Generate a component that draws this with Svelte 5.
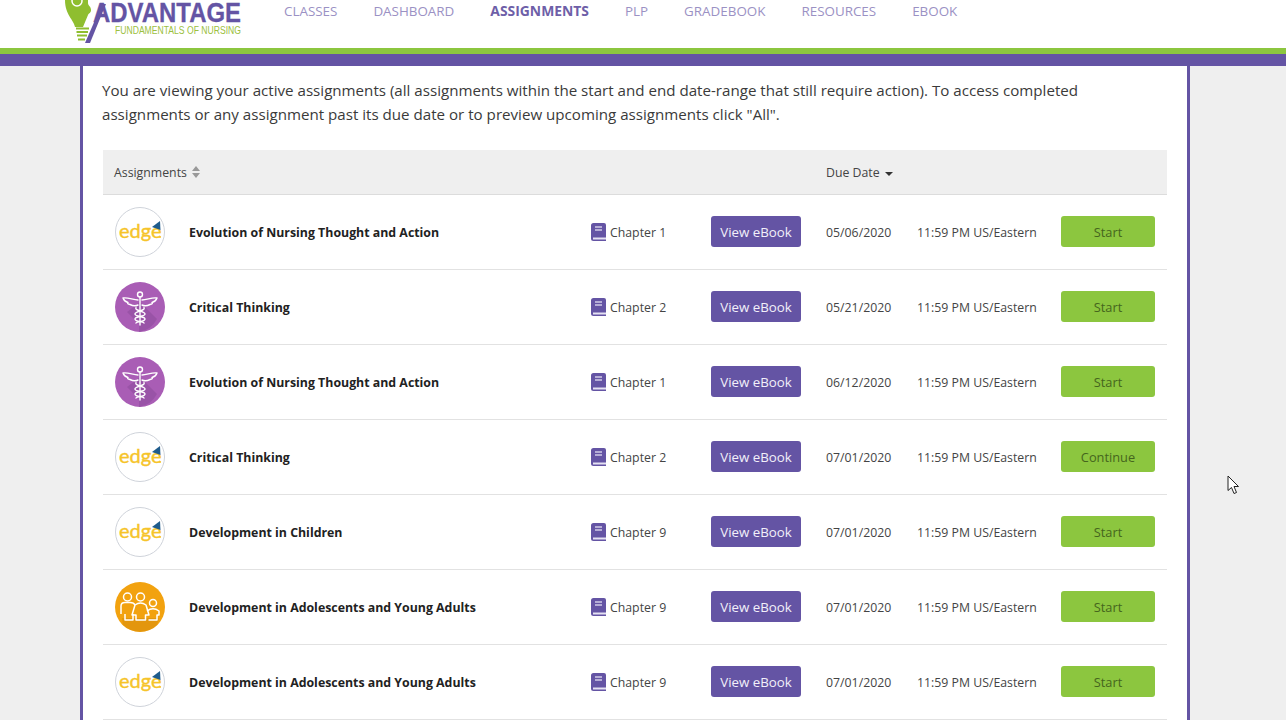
<script>
	const nav = ['CLASSES', 'DASHBOARD', 'ASSIGNMENTS', 'PLP', 'GRADEBOOK', 'RESOURCES', 'EBOOK'];

	const rows = [
		{ icon: 'edge', title: 'Evolution of Nursing Thought and Action', chapter: 1, date: '05/06/2020', action: 'Start' },
		{ icon: 'med', title: 'Critical Thinking', chapter: 2, date: '05/21/2020', action: 'Start' },
		{ icon: 'med', title: 'Evolution of Nursing Thought and Action', chapter: 1, date: '06/12/2020', action: 'Start' },
		{ icon: 'edge', title: 'Critical Thinking', chapter: 2, date: '07/01/2020', action: 'Continue' },
		{ icon: 'edge', title: 'Development in Children', chapter: 9, date: '07/01/2020', action: 'Start' },
		{ icon: 'family', title: 'Development in Adolescents and Young Adults', chapter: 9, date: '07/01/2020', action: 'Start' },
		{ icon: 'edge', title: 'Development in Adolescents and Young Adults', chapter: 9, date: '07/01/2020', action: 'Start' }
	];
</script>

<header>
	<div class="logo">
		<svg width="180" height="48" viewBox="0 0 180 48">
			<!-- bulb -->
			<path d="M0 -6 H23 V3 C23 6 26 6 26 10 C26 13 24 13 23 15 L18 27 H10 C9 20 0 15 0 0 Z" fill="#8fbe2f" />
			<circle cx="12" cy="1" r="5" fill="none" stroke="#fff" stroke-width="1.500" />
			<path d="M11 28.500 H24 M11.500 32 H23 M12 35.500 H22 M13 39.500 H20" stroke="#8fbe2f" stroke-width="2.200" />
			<path d="M20 43 L37 4 H41 L25 43 Z" fill="#6454a4" />
			<text x="28" y="22" class="brand" textLength="148" lengthAdjust="spacingAndGlyphs">ADVANTAGE</text>
			<text x="50" y="34" class="tagline" textLength="126" lengthAdjust="spacingAndGlyphs">FUNDAMENTALS OF NURSING</text>
		</svg>
	</div>
	<nav>
		{#each nav as item}
			<a href="#top" class:active={item === 'ASSIGNMENTS'}>{item}</a>
		{/each}
	</nav>
</header>
<div class="stripe-green"></div>
<div class="stripe-purple"></div>

<main>
	<div class="panel">
		<p class="intro">
			You are viewing your active assignments (all assignments within the start and end date-range that still require action). To access completed assignments or any assignment past its due date or to preview upcoming assignments click "All".
		</p>

		<div class="table">
			<div class="row head">
				<div class="h-title">
					Assignments
					<svg width="8" height="12" viewBox="0 0 8 12"><path d="M4 0 L8 5 H0 Z M4 12 L0 7 H8 Z" fill="#999" /></svg>
				</div>
				<div class="h-date">
					Due Date
					<svg width="8" height="5" viewBox="0 0 8 5"><path d="M0 0 H8 L4 4 Z" fill="#333" /></svg>
				</div>
			</div>

			{#each rows as row}
				<div class="row">
					<div class="badge">
						{#if row.icon === 'edge'}
							<svg width="50" height="50" viewBox="0 0 50 50">
								<circle cx="25" cy="25" r="24.500" fill="#fff" stroke="#cfd3da" />
								<text x="4" y="31" class="edge">edge</text>
								<circle cx="45" cy="30" r="1" fill="#f6c42a" />
								<path d="M37 20 L45 14 L45.500 23 Z" fill="#1f5c8c" />
							</svg>
						{:else if row.icon === 'med'}
							<svg width="50" height="50" viewBox="0 0 50 50">
								<circle cx="25" cy="25" r="25" fill="#a95db5" />
								<path d="M25 20 L42 37 A25 25 0 0 1 24 50 L24 42 L12 30 Z" fill="#8f4c9e" opacity="0.6" />
								<g fill="none" stroke="#fff" stroke-width="1.400" stroke-linecap="round" stroke-linejoin="round">
									<circle cx="25" cy="12.500" r="2.500" />
									<path d="M25 15 V43" />
									<path d="M23 18 C18 18 13 15 8 16 C9 19 11 20 13 20.500 C12 21.500 13 22 15 22.500 C18 24 21 24 23 23" />
									<path d="M27 18 C32 18 37 15 42 16 C41 19 39 20 37 20.500 C38 21.500 37 22 35 22.500 C32 24 29 24 27 23" />
									<path d="M21 25.500 C19 29 30 29 30 32 C30 35 20 34 20 37 C20 40 28 39 29 41" />
									<path d="M29 25.500 C31 29 20 29 20 32 C20 35 30 34 30 37 C30 40 22 39 21 41" />
								</g>
							</svg>
						{:else}
							<svg width="50" height="50" viewBox="0 0 50 50">
								<circle cx="25" cy="25" r="25" fill="#f2a20f" />
								<path d="M7 36 L44 36 L42 43 A25 25 0 0 1 8 43 Z" fill="#d98e0c" opacity="0.6" />
								<g fill="none" stroke="#fff" stroke-width="1.500" stroke-linejoin="round">
									<circle cx="12.500" cy="15" r="4" />
									<path d="M6 32 V24 Q6 20.500 10 20.500 H15 Q19 20.500 20 23 M18 32 V38 H10 V32" />
									<circle cx="25.500" cy="15" r="4" />
									<path d="M20 23 Q25.500 19 31 23 L34 33 H30.500 V38 H21 V33 H17 Z" />
									<circle cx="38" cy="21" r="3.500" />
									<path d="M32 29 Q38 24.500 44 29 V33 H42 V38 H33.500" />
								</g>
							</svg>
						{/if}
					</div>
					<div class="title">{row.title}</div>
					<div class="chapter">
						<svg width="15" height="18" viewBox="0 0 15 18">
							<path d="M2.500 0 H13 A2 2 0 0 1 15 2 V18 H2.500 A2.500 2.500 0 0 1 0 15.500 V2.500 A2.500 2.500 0 0 1 2.500 0 Z" fill="#6454a4" />
							<path d="M4 4 H11 M4 7 H11" stroke="#cfcae6" stroke-width="1.500" />
							<path d="M2 14.500 H15 V16.500 H2 Z" fill="#e4e1f2" />
						</svg>
						Chapter {row.chapter}
					</div>
					<div><button class="ebook">View eBook</button></div>
					<div class="date">{row.date}</div>
					<div class="time">11:59 PM US/Eastern</div>
					<div><button class="go">{row.action}</button></div>
				</div>
			{/each}
		</div>
	</div>
</main>

<svg class="cursor" width="13" height="20" viewBox="0 0 13 20">
	<path d="M1 1 V15.500 L4.500 12.500 L7 18.500 L9.500 17.500 L7 11.500 H11.500 Z" fill="#fff" stroke="#222" stroke-width="1" stroke-linejoin="round" />
</svg>

<style>
	:global(body) {
		background: #efefef;
		font-family: 'Open Sans', 'Liberation Sans', sans-serif;
		color: #333;
		height: 720px;
		overflow: hidden;
	}

	header {
		display: flex;
		height: 48px;
		background: #fff;
		overflow: hidden;
	}

	.logo {
		width: 284px;
		padding-left: 65px;
		box-sizing: border-box;
		flex-shrink: 0;
	}

	.logo svg {
		display: block;
	}

	.brand {
		font: bold 27px 'Liberation Sans', sans-serif;
		fill: #6454a4;
		stroke: #6454a4;
		stroke-width: 0.3px;
	}

	.tagline {
		font: 10px 'Liberation Sans', sans-serif;
		fill: #9bc040;
	}

	nav {
		display: flex;
		gap: 36px;
		padding-top: 2px;
	}

	nav a {
		color: #9b91c4;
		font-size: 13.400px;
		line-height: 18px;
		text-decoration: none;
	}

	nav a.active {
		color: #6e5fa8;
		font-weight: 700;
		font-size: 13.900px;
	}

	.stripe-green {
		height: 6px;
		background: #8cc63f;
	}

	.stripe-purple {
		height: 12px;
		background: #6454a4;
	}

	main {
		width: 1110px;
		margin-left: 80px;
		box-sizing: border-box;
		background: #fff;
		border-left: 3px solid #6454a4;
		border-right: 3px solid #6454a4;
	}

	.panel {
		padding: 12px 20px 0 20px;
	}

	.intro {
		margin: 0 0 24px -1px;
		font-size: 15.130px;
		line-height: 24px;
		color: #3a3a3a;
	}

	.row {
		display: grid;
		grid-template-columns: 74px 402px 120px 115px 91px 144px 94px;
		padding: 0 12px;
		height: 75px;
		box-sizing: border-box;
		align-items: center;
		border-bottom: 1px solid #e2e2e2;
		font-size: 12.300px;
	}

	.row.head {
		height: 45px;
		background: #efefef;
		color: #444;
		border-bottom: 1px solid #dcdcdc;
	}

	.h-title {
		grid-column: 1 / 5;
		display: flex;
		align-items: center;
		gap: 5px;
		margin-left: -1px;
	}

	.h-date {
		grid-column: 5 / 7;
		display: flex;
		align-items: center;
		gap: 5px;
	}

	.h-date svg {
		margin-top: 4px;
	}

	.badge {
		height: 50px;
	}

	.badge svg {
		display: block;
	}

	.edge {
		font: 20px Lato, 'Open Sans', sans-serif;
		fill: #f6c42a;
		stroke: #f6c42a;
		stroke-width: 0.4px;
	}

	.title {
		font-weight: 700;
		color: #222;
		font-size: 12.350px;
	}

	.chapter {
		display: flex;
		align-items: center;
		gap: 4px;
		color: #444;
	}

	button {
		display: block;
		border: 0;
		border-radius: 3px;
		font-family: inherit;
		height: 31px;
		padding: 0;
		margin-top: -1px;
	}

	.ebook {
		width: 90px;
		background: #6454a4;
		color: #f2f0fa;
		font-size: 13.300px;
	}

	.date,
	.time {
		color: #444;
	}

	.go {
		width: 94px;
		background: #8cc63f;
		color: #45651d;
		font-size: 12.800px;
	}

	.cursor {
		position: absolute;
		left: 1227px;
		top: 475px;
	}
</style>
